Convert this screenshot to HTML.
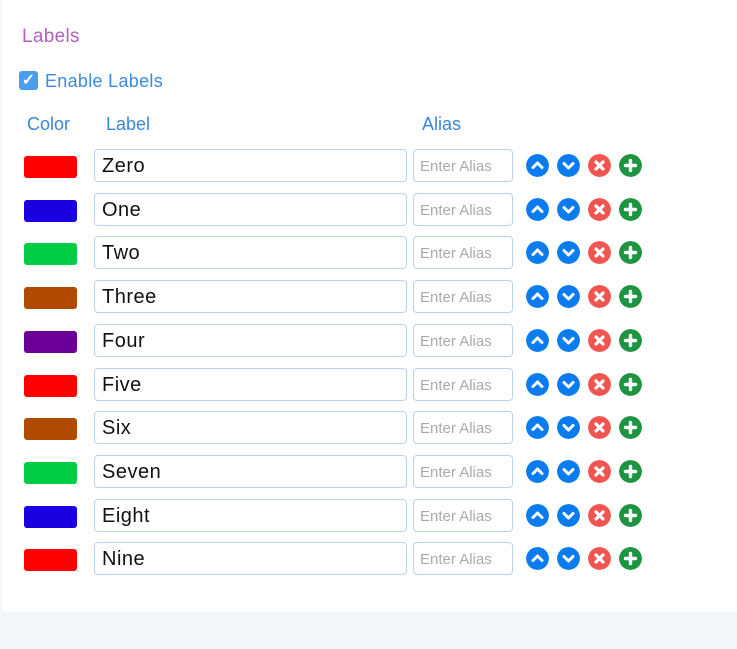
<!DOCTYPE html>
<html><head><style>
body{margin:0;width:737px;height:649px;background:#f4f7fa;font-family:"Liberation Sans",sans-serif;position:relative;overflow:hidden}
.card{position:absolute;left:2px;top:0;width:740px;height:612px;background:#fff;border-radius:0 0 0 6px}
.a{position:absolute}
.sw{position:absolute;left:24px;width:53px;height:22px;border-radius:3px}
.in{position:absolute;left:94px;border:1px solid #b8d4ec;border-radius:4px;font-size:20px;line-height:32px;padding-left:7px;box-sizing:border-box;width:313px;height:33px;color:#111;letter-spacing:0.5px}
.al{position:absolute;left:413px;width:100px;height:33px;border:1px solid #b8d4ec;border-radius:4px;box-sizing:border-box;font-size:15px;line-height:33px;padding-left:6px;color:#aaa;white-space:nowrap;overflow:hidden}
.ic{position:absolute;width:23px;height:23px;border-radius:50%}
</style></head><body>
<div class="card"></div>
<div class="a" style="left:22px;top:26px;font-size:19px;color:#b35ec2;letter-spacing:0.3px">Labels</div>
<div class="a" style="left:19px;top:71px;width:19px;height:19px;background:#4a9ef0;border-radius:3px;color:#fff;font-size:16px;line-height:19px;text-align:center;font-weight:bold">✓</div>
<div class="a" style="left:45px;top:71px;font-size:18px;color:#3a8ae0;letter-spacing:0.3px">Enable Labels</div>
<div class="a" style="left:27px;top:114px;font-size:18px;color:#3a85e0">Color</div>
<div class="a" style="left:106px;top:114px;font-size:18px;color:#3a85e0">Label</div>
<div class="a" style="left:422px;top:114px;font-size:18px;color:#3a85e0">Alias</div>
<div id="rows"></div>
<script>
var names=["Zero","One","Two","Three","Four","Five","Six","Seven","Eight","Nine"];
var cols=["#ff0000","#1a00e0","#00cc44","#b04a00","#6a0096","#ff0000","#b04a00","#00cc44","#1a00e0","#ff0000"];
var h="";
for(var i=0;i<10;i++){var t=149+i*43.7;
h+='<div class="sw" style="top:'+(t+7)+'px;background:'+cols[i]+'"></div>';
h+='<div class="in" style="top:'+t+'px">'+names[i]+'</div>';
h+='<div class="al" style="top:'+t+'px">Enter Alias</div>';
var ic=[['#0a7cf0','<path d="M7 13.5L11.5 9L16 13.5" stroke="#fff" stroke-width="3" fill="none" stroke-linecap="round" stroke-linejoin="round"/>'],
['#0a7cf0','<path d="M7 9.5L11.5 14L16 9.5" stroke="#fff" stroke-width="3" fill="none" stroke-linecap="round" stroke-linejoin="round"/>'],
['#f0554f','<path d="M8 8L15 15M15 8L8 15" stroke="#fff" stroke-width="3.2" stroke-linecap="round"/>'],
['#1c9440','<path d="M11.5 6.5V16.5M6.5 11.5H16.5" stroke="#fff" stroke-width="3.4" stroke-linecap="round"/>']];
for(var j=0;j<4;j++){h+='<svg class="ic" style="left:'+(526+j*31)+'px;top:'+(t+5)+'px" viewBox="0 0 23 23"><circle cx="11.5" cy="11.5" r="11.5" fill="'+ic[j][0]+'"/>'+ic[j][1]+'</svg>';}
}
document.getElementById("rows").innerHTML=h;
</script>
</body></html>
